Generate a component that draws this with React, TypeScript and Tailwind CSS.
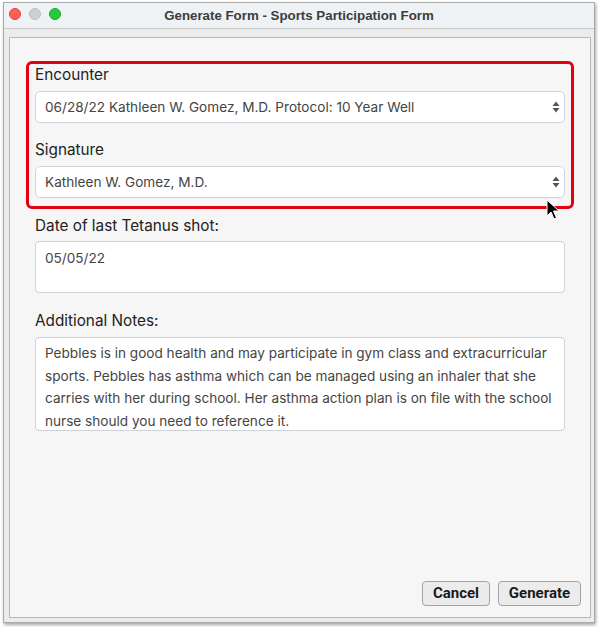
import React from "react";

const Arrows = () => (
  <svg width="8" height="12" viewBox="0 0 8 12" className="shrink-0">
    <path d="M4 0.5 L7.5 5 L0.5 5 Z" fill="#555" />
    <path d="M4 11.5 L7.5 7 L0.5 7 Z" fill="#555" />
  </svg>
);

const Select = ({ value }: { value: string }) => (
  <div className="h-[32px] bg-white border border-[#cfd3d8] rounded-[5px] flex items-center pl-[9px] pr-[4px]">
    <span className="flex-1 text-[13.6px] text-[#444] truncate">{value}</span>
    <Arrows />
  </div>
);

export default function App() {
  return (
    <div
      className="w-[598px] h-[627px] bg-white relative overflow-hidden"
      style={{ fontFamily: "Inter, 'Noto Sans', sans-serif" }}
    >
      <div className="ml-[3px] mt-[2px] w-[592px] h-[621px] border border-[#a9a9a9] flex flex-col shadow-[1px_2px_3px_rgba(0,0,0,0.35)]">
        <div className="h-[26px] shrink-0 bg-[#eef2f5] border-b border-[#c9c9c9] relative flex items-center justify-center">
          <div className="absolute left-[5px] top-[5px] flex gap-[8px]">
            <div className="w-[12px] h-[12px] rounded-full bg-[#fe5f57] border border-[#e2463f]" />
            <div className="w-[12px] h-[12px] rounded-full bg-[#d0d0d2] border border-[#bdbdbf]" />
            <div className="w-[12px] h-[12px] rounded-full bg-[#28c840] border border-[#1aab29]" />
          </div>
          <span
            className="text-[13.3px] font-bold text-[#3c3c3c]"
            style={{ fontFamily: "'Liberation Sans', Arial, sans-serif" }}
          >
            Generate Form - Sports Participation Form
          </span>
        </div>
        <div className="flex-1 bg-[#ececec] pl-[5px] pr-[3px] pt-[8px] pb-[4px] flex">
          <div className="flex-1 bg-[#f6f6f6] border border-[#b8b8b8] flex flex-col px-[16px] pt-[23px] pb-[11px]">
            <div className="border-[3px] border-[#e3000f] rounded-[6px] px-[6px] pt-[1px] pb-[8px]">
              <div className="text-[15.3px] leading-[20px] text-[#222] mb-[6px]">Encounter</div>
              <Select value="06/28/22 Kathleen W. Gomez, M.D. Protocol: 10 Year Well" />
              <div className="text-[15.3px] leading-[20px] text-[#222] mt-[17px] mb-[6px]">Signature</div>
              <Select value="Kathleen W. Gomez, M.D." />
            </div>
            <div className="px-[9px]">
              <div className="text-[15.3px] leading-[20px] text-[#222] mt-[7px] mb-[5px]">
                Date of last Tetanus shot:
              </div>
              <div className="h-[52px] bg-white border border-[#cfd3d8] rounded-[4px] px-[9px] pt-[6px] text-[13.6px] text-[#444]">
                05/05/22
              </div>
              <div className="text-[15.3px] leading-[20px] text-[#222] mt-[18px] mb-[6px]">
                Additional Notes:
              </div>
              <div className="h-[94px] bg-white border border-[#cfd3d8] rounded-[4px] px-[9px] pt-[4px] text-[13.6px] leading-[22.5px] text-[#444]">
                Pebbles is in good health and may participate in gym class and extracurricular sports. Pebbles has asthma which can be managed using an inhaler that she carries with her during school. Her asthma action plan is on file with the school nurse should you need to reference it.
              </div>
            </div>
            <div className="flex-1" />
            <div
              className="flex justify-end gap-[8px] mr-[-7px]"
              style={{ fontFamily: "Roboto, 'Liberation Sans', sans-serif" }}
            >
              <button className="h-[25px] w-[68px] rounded-[4px] border border-[#a3a3a3] bg-[#ececec] text-[15px] font-bold text-[#1a1a1a]">
                Cancel
              </button>
              <button className="h-[25px] w-[83px] rounded-[4px] border border-[#a3a3a3] bg-[#ececec] text-[15px] font-bold text-[#1a1a1a]">
                Generate
              </button>
            </div>
          </div>
        </div>
      </div>
      <svg
        className="absolute left-[546px] top-[199px]"
        width="14"
        height="22"
        viewBox="0 0 14 22"
      >
        <path
          d="M1 1 L1 17 L5 13 L8 20 L10.5 19 L7.5 12 L13 12 Z"
          fill="#000"
          stroke="#fff"
          strokeWidth="1"
          strokeLinejoin="round"
        />
      </svg>
    </div>
  );
}
